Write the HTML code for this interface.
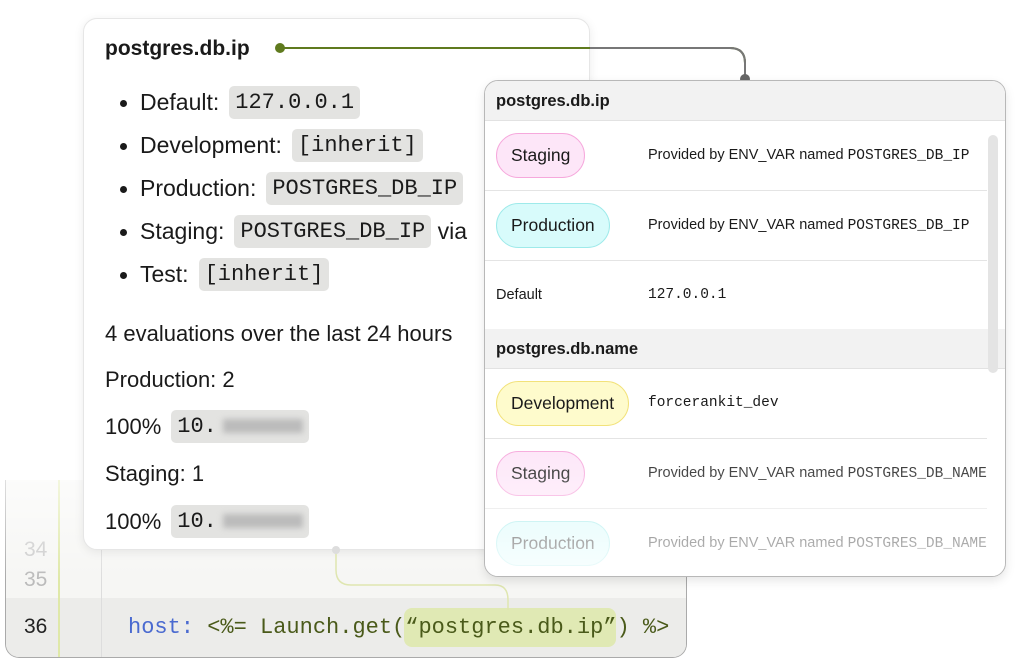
<!DOCTYPE html>
<html><head><meta charset="utf-8"><style>
*{box-sizing:border-box;margin:0;padding:0}
body{width:1024px;height:664px;background:#fff;position:relative;overflow:hidden;font-family:"Liberation Sans",sans-serif;color:#1a1a1a}
.mono{font-family:"Liberation Mono",monospace}
.editor{position:absolute;left:5px;top:480px;width:682px;height:178px;border:1px solid #aaa;border-top:none;border-radius:0 0 14px 14px;background:#f6f6f4;overflow:hidden}
.editor .row36{position:absolute;left:0;top:118px;width:100%;height:60px;background:#ececea}
.ln{position:absolute;left:18px;font-size:21px;font-family:"Liberation Sans",sans-serif;color:#c8c8c8}
.gut{position:absolute;left:52px;top:0;width:2px;height:178px;background:#dfe8a8}
.gut2{position:absolute;left:95px;top:0;width:1px;height:178px;background:#ddd}
.code{position:absolute;left:122px;top:135px;font-size:22px;color:#4a5a1a;white-space:pre}
.hl{position:absolute;left:398px;top:128px;width:212px;height:39px;background:#e0e9b4;border-radius:8px}
.fadeL{position:absolute;left:0;top:380px;width:700px;height:200px;background:linear-gradient(#fff 20%,rgba(255,255,255,0) 100%)}
.card{position:absolute;left:83px;top:18px;width:507px;height:532px;background:#fff;border:1px solid #e6e6e6;border-radius:14px;box-shadow:0 2px 10px rgba(0,0,0,.08)}
.card h1{position:absolute;left:21px;top:18px;font-size:21px;font-weight:bold}
.li{position:absolute;left:56px;font-size:23px;white-space:nowrap;display:flex;align-items:center}
.li:before{content:"";position:absolute;left:-20px;top:50%;width:7px;height:7px;margin-top:-3px;border-radius:50%;background:#1a1a1a}
.chip{background:#e3e3e1;border-radius:5px;padding:4px 6px;margin-left:10px;font-size:22px;font-family:"Liberation Mono",monospace}
.t{position:absolute;left:21px;font-size:22px;white-space:nowrap;display:flex;align-items:center}
.blur{display:inline-block;width:80px;height:14px;background:#bbb;filter:blur(3px);margin-left:6px;vertical-align:middle}
.panel{position:absolute;left:484px;top:80px;width:522px;height:497px;background:#fff;border:1.5px solid #b8b8b8;border-radius:14px;overflow:hidden;box-shadow:0 4px 10px rgba(0,0,0,.1)}
.hd{position:absolute;left:0;width:100%;height:40px;background:#f2f2f2;font-weight:bold;font-size:16.5px;padding:11px 11px;border-bottom:1px solid #e2e2e2}
.r{position:absolute;left:0;width:502px;height:70px;border-bottom:1px solid #e4e4e4}
.pill{position:absolute;left:11px;top:12px;height:45px;border-radius:23px;font-size:17.5px;padding:0 14px;line-height:43px}
.v{position:absolute;left:163px;top:26px;font-size:14.5px;white-space:nowrap}
.sb{position:absolute;left:503px;top:54px;width:10px;height:238px;border-radius:5px;background:#e4e4e4}
.fadeP{position:absolute;left:0;top:360px;width:100%;height:137px;background:linear-gradient(rgba(255,255,255,0),rgba(255,255,255,.85))}
</style></head><body>
<div class="editor">
<div class="row36"></div>
<div class="gut"></div><div class="gut2"></div>
<div class="ln" style="top:58px;color:#ccc">34</div>
<div class="ln" style="top:88px;color:#bbb">35</div>
<div class="ln" style="top:135px;color:#222">36</div>
<div class="hl"></div>
<div class="code mono"><span style="color:#4a6ad0">host:</span> &lt;%= Launch.get(“postgres.db.ip”) %&gt;</div>
</div>
<div class="fadeL"></div>
<div class="card">
<h1>postgres.db.ip</h1>
<div class="li" style="top:67px">Default: <span class="chip">127.0.0.1</span></div>
<div class="li" style="top:110px">Development: <span class="chip">[inherit]</span></div>
<div class="li" style="top:153px">Production: <span class="chip">POSTGRES_DB_IP</span></div>
<div class="li" style="top:196px">Staging: <span class="chip">POSTGRES_DB_IP</span>&nbsp;via</div>
<div class="li" style="top:239px">Test: <span class="chip">[inherit]</span></div>
<div class="t" style="top:302px">4 evaluations over the last 24 hours</div>
<div class="t" style="top:348px">Production: 2</div>
<div class="t" style="top:391px">100% <span class="chip">10.<span class="blur"></span></span></div>
<div class="t" style="top:442px">Staging: 1</div>
<div class="t" style="top:486px">100% <span class="chip">10.<span class="blur"></span></span></div>
</div>
<svg style="position:absolute;left:0;top:0" width="1024" height="664">
<path d="M280 48 H730 Q745 48 745 63 V78" fill="none" stroke="#5f7a1e" stroke-width="2"/>
<path d="M590 48 H730 Q745 48 745 63 V78" fill="none" stroke="#777" stroke-width="2"/>
<circle cx="280" cy="48" r="5" fill="#5f7a1e"/>
<circle cx="745" cy="79" r="5" fill="#666"/>
<path d="M336 552 V570 Q336 585 351 585 H495 Q508 585 508 600 V610" fill="none" stroke="#dfe6b0" stroke-width="1.5"/>
<circle cx="336" cy="550" r="4" fill="#ddd"/>
</svg>
<div class="panel">
<div class="hd" style="top:0">postgres.db.ip</div>
<div class="r" style="top:40px"><div class="pill" style="background:#fde6f8;border:1px solid #f6a8dc">Staging</div><div class="v">Provided by ENV_VAR named <span class="mono">POSTGRES_DB_IP</span></div></div>
<div class="r" style="top:110px"><div class="pill" style="background:#d8fbfb;border:1px solid #9eeaea">Production</div><div class="v">Provided by ENV_VAR named <span class="mono">POSTGRES_DB_IP</span></div></div>
<div class="r" style="top:180px"><div class="v" style="left:11px">Default</div><div class="v mono">127.0.0.1</div></div>
<div class="hd" style="top:248px">postgres.db.name</div>
<div class="r" style="top:288px"><div class="pill" style="background:#fefbcc;border:1px solid #f2e27a">Development</div><div class="v mono">forcerankit_dev</div></div>
<div class="r" style="top:358px"><div class="pill" style="background:#fde6f8;border:1px solid #f6a8dc">Staging</div><div class="v">Provided by ENV_VAR named <span class="mono">POSTGRES_DB_NAME</span></div></div>
<div class="r" style="top:428px;border:none"><div class="pill" style="background:#d8fbfb;border:1px solid #9eeaea">Production</div><div class="v">Provided by ENV_VAR named <span class="mono">POSTGRES_DB_NAME</span></div></div>
<div class="sb"></div>
<div class="fadeP"></div>
</div>
</body></html>
